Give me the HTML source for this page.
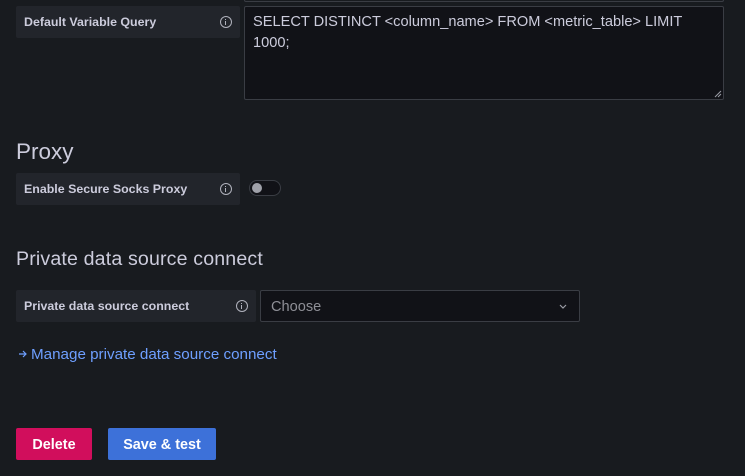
<!DOCTYPE html>
<html><head><meta charset="utf-8"><style>
*{box-sizing:border-box;margin:0;padding:0}
body{width:745px;height:476px;background:#181b1f;font-family:"Liberation Sans",sans-serif;position:relative;overflow:hidden;color:#ccccdc}
.abs{position:absolute}
.label{background:#22252b;border-radius:2px;font-size:12.4px;font-weight:bold;color:#ccccdc;display:flex;align-items:center;padding-left:8px}
.info{position:absolute;right:8px;top:50%;margin-top:-6px;width:12px;height:12px;border:1.3px solid #b0b2bc;border-radius:50%}
.info:before{content:"";position:absolute;left:4px;top:4.3px;width:1.4px;height:4px;background:#b0b2bc}
.info:after{content:"";position:absolute;left:4px;top:1.8px;width:1.4px;height:1.4px;background:#b0b2bc}
.input{background:#111217;border:1px solid #3a3d44;border-radius:2px}
</style></head><body>
<div class="abs" style="left:244px;top:-4px;width:480px;height:6px;border:1px solid #3a3d44;border-top:none;border-radius:2px"></div>
<div class="abs label" style="left:16px;top:6px;width:224px;height:32px">Default Variable Query<span class="info"></span></div>
<div class="abs input" style="left:244px;top:6px;width:480px;height:94px;padding:5px 30px 6px 8px;font-size:14.6px;line-height:21px;color:#ccccdc">SELECT DISTINCT &lt;column_name&gt; FROM &lt;metric_table&gt; LIMIT 1000;
<svg class="abs" style="right:1px;bottom:1px" width="8" height="8"><path d="M1 7L7 1M4 7L7 4" stroke="#9a9ca4" stroke-width="1"/></svg></div>
<div class="abs" style="left:16px;top:139px;font-size:22.5px;color:#ccccdc">Proxy</div>
<div class="abs label" style="left:16px;top:173px;width:224px;height:32px">Enable Secure Socks Proxy<span class="info"></span></div>
<div class="abs" style="left:249px;top:180px;width:32px;height:16px;border:1px solid #3a3d44;border-radius:8px;background:#111217"><div class="abs" style="left:2px;top:2px;width:10px;height:10px;border-radius:50%;background:#9fa1a9"></div></div>
<div class="abs" style="left:16px;top:248px;font-size:19.6px;color:#ccccdc;font-weight:500;letter-spacing:0.15px">Private data source connect</div>
<div class="abs label" style="left:16px;top:290px;width:240px;height:32px">Private data source connect<span class="info"></span></div>
<div class="abs input" style="left:260px;top:290px;width:320px;height:32px;font-size:14.6px;color:#8e8f96;padding:9px 10px;line-height:14px">Choose
<svg class="abs" style="right:12px;top:13px" width="8" height="5"><path d="M1 1L4 4L7 1" stroke="#9a9ca4" fill="none" stroke-width="1.2"/></svg></div>
<div class="abs" style="left:18px;top:346px;font-size:15.2px;color:#6e9fff;white-space:nowrap"><svg width="10" height="10" style="vertical-align:0px"><path d="M1 5H8M5 2L8 5L5 8" stroke="#6e9fff" fill="none" stroke-width="1.2"/></svg><span style="margin-left:3px">Manage private data source connect</span></div>
<div class="abs" style="left:16px;top:428px;width:76px;height:32px;background:#d10e5c;border-radius:2px;color:#fff;font-size:14.4px;font-weight:bold;display:flex;align-items:center;justify-content:center;padding-top:2px">Delete</div>
<div class="abs" style="left:108px;top:428px;width:108px;height:32px;background:#3d71d9;border-radius:2px;color:#fff;font-size:14.4px;font-weight:bold;display:flex;align-items:center;justify-content:center;padding-top:2px">Save &amp; test</div>
</body></html>
